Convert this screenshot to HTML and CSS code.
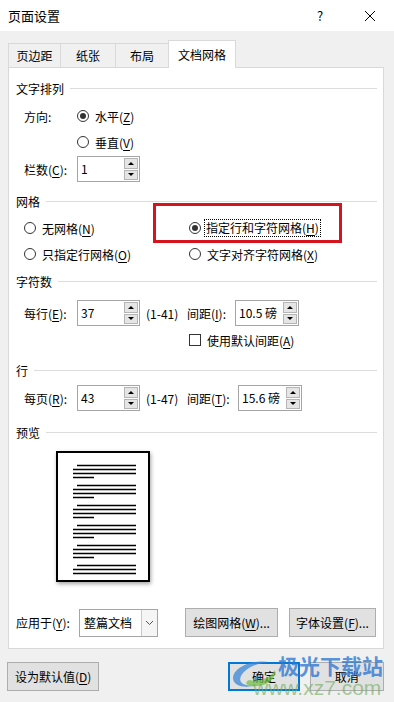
FILE: index.html
```html
<!DOCTYPE html>
<html lang="zh-CN">
<head>
    <meta charset="UTF-8">
    <meta name="viewport" content="width=device-width, initial-scale=1.0">
    <title>页面设置</title>
    <link rel="stylesheet" href="styles.css">
</head>
<body>
    <div class="titlebar">
        <span class="title">页面设置</span>
        <span class="help">?</span>
        <span class="close">
            <svg width="12" height="12" viewBox="0 0 12 12"><path d="M1 1L11 11M11 1L1 11" stroke="#000" stroke-width="1"/></svg>
        </span>
    </div>

    <div class="main">
        <div class="tabs">
            <div class="tab tab-1">页边距</div>
            <div class="tab tab-2">纸张</div>
            <div class="tab tab-3">布局</div>
            <div class="tab tab-4 active">文档网格</div>
        </div>

        <div class="panel">
            <div class="group-title gt-1">文字排列</div>
            <div class="row row-dir">
                <span class="label">方向:</span>
                <span class="radio checked"></span>
                <span class="opt">水平(<u>Z</u>)</span>
            </div>
            <div class="row row-dir">
                <span class="label"></span>
                <span class="radio"></span>
                <span class="opt">垂直(<u>V</u>)</span>
            </div>
            <div class="row row-cols">
                <span class="label">栏数(<u>C</u>):</span>
                <div class="spin">
                    <span class="spin-value">1</span>
                    <div class="spin-btns"><span class="up"></span><span class="down"></span></div>
                </div>
            </div>

            <div class="group-title gt-2">网格</div>
            <div class="row grid-row first">
                <div class="grid-col left"><span class="radio"></span><span class="opt">无网格(<u>N</u>)</span></div>
                <div class="grid-col right"><span class="radio checked"></span><span class="opt focus">指定行和字符网格(<u>H</u>)</span></div>
            </div>
            <div class="row grid-row">
                <div class="grid-col left"><span class="radio"></span><span class="opt">只指定行网格(<u>O</u>)</span></div>
                <div class="grid-col right"><span class="radio"></span><span class="opt">文字对齐字符网格(<u>X</u>)</span></div>
            </div>

            <div class="group-title gt-3">字符数</div>
            <div class="row num-row chars">
                <span class="label">每行(<u>E</u>):</span>
                <div class="spin">
                    <span class="spin-value">37</span>
                    <div class="spin-btns"><span class="up"></span><span class="down"></span></div>
                </div>
                <span class="range">(1-41)</span>
                <span class="pitch-label">间距(<u>I</u>):</span>
                <div class="spin pitch">
                    <span class="spin-value">10.5 磅</span>
                    <div class="spin-btns"><span class="up"></span><span class="down"></span></div>
                </div>
            </div>
            <div class="row check-row">
                <span class="checkbox"></span>
                <span class="opt">使用默认间距(<u>A</u>)</span>
            </div>

            <div class="group-title gt-4">行</div>
            <div class="row num-row lines">
                <span class="label">每页(<u>R</u>):</span>
                <div class="spin">
                    <span class="spin-value">43</span>
                    <div class="spin-btns"><span class="up"></span><span class="down"></span></div>
                </div>
                <span class="range">(1-47)</span>
                <span class="pitch-label">间距(<u>T</u>):</span>
                <div class="spin pitch">
                    <span class="spin-value">15.6 磅</span>
                    <div class="spin-btns"><span class="up"></span><span class="down"></span></div>
                </div>
            </div>

            <div class="group-title gt-5">预览</div>
            <div class="preview">
                <div class="page">
                    <svg width="94" height="131" viewBox="0 0 94 131">
                        <rect x="1" y="1" width="92" height="129" fill="#fff" stroke="#000" stroke-width="2"/>
                        <g stroke="#000" stroke-width="1.4">
                            <path d="M21 14.5H80M17 18.5H80M17 22.5H80M17 26.5H38"/>
                            <path d="M21 34.5H80M17 38.5H80M17 42.5H80M17 46.5H38"/>
                            <path d="M21 54.5H80M17 58.5H80M17 62.5H80M17 66.5H38"/>
                            <path d="M21 74.5H80M17 78.5H80M17 82.5H80M17 86.5H38"/>
                            <path d="M21 94.5H80M17 98.5H80M17 102.5H80M17 106.5H38"/>
                            <path d="M21 114.5H80M17 118.5H80M17 122.5H80"/>
                        </g>
                    </svg>
                </div>
            </div>

            <div class="apply-row">
                <span class="apply-label">应用于(<u>Y</u>):</span>
                <div class="combo">
                    <span class="combo-value">整篇文档</span>
                    <span class="combo-arrow">
                        <svg width="9" height="6" viewBox="0 0 9 6"><path d="M1 1L4.5 4.5L8 1" fill="none" stroke="#555" stroke-width="1"/></svg>
                    </span>
                </div>
                <button class="btn btn-draw">绘图网格(<u>W</u>)...</button>
                <button class="btn btn-font">字体设置(<u>F</u>)...</button>
            </div>
        </div>

        <div class="footer">
            <button class="btn btn-default">设为默认值(<u>D</u>)</button>
            <button class="btn btn-ok">确定</button>
            <button class="btn btn-cancel">取消</button>
        </div>
    </div>

    <div class="highlight"></div>

    <div class="watermark">
        <svg class="wm-logo" width="60" height="34" viewBox="0 0 60 34">
            <path d="M40 4C22 1 4 10 4 20C4 28 16 31 28 27C14 29 9 24 12 18C16 10 28 5 40 4Z" fill="#3a86d8" opacity="0.75"/>
            <path d="M20 22C30 24 42 20 46 12C48 20 38 30 22 28C16 27 16 24 20 22Z" fill="#6cbf3c" opacity="0.7"/>
        </svg>
        <span class="wm-title">极光下载站</span>
        <span class="wm-url">www.xz7.com</span>
    </div>
</body>
</html>
```

FILE: styles.css
```css
body {
    margin: 0;
    width: 394px;
    height: 702px;
    overflow: hidden;
    position: relative;
    background-color: #f0f0f0;
    font-family: "Noto Sans CJK SC", "Microsoft YaHei", sans-serif;
    font-size: 12px;
    color: #000;
}

u {
    text-decoration: underline;
    text-underline-offset: 2px;
}

.titlebar {
    height: 31px;
    background: #fff;
    display: flex;
    align-items: center;
    padding-left: 8px;
    font-size: 13px;
}

.help {
    margin-left: auto;
    width: 10px;
    font-size: 13px;
}

.close {
    display: flex;
    margin-left: 37px;
    margin-right: 18px;
}

.main {
    padding: 9px 10px 0 8px;
}

.tabs {
    display: flex;
    align-items: flex-end;
    height: 27px;
}

.tab {
    height: 24px;
    box-sizing: border-box;
    border: 1px solid #d9d9d9;
    border-bottom: none;
    margin-right: -1px;
    display: flex;
    align-items: center;
    justify-content: center;
    background: #f0f0f0;
}

.tab-1 { width: 53px; }
.tab-2 { width: 56px; }
.tab-3 { width: 54px; }

.tab-4 {
    width: 68px;
    height: 28px;
    margin-bottom: -1px;
    background: #fff;
    position: relative;
    z-index: 1;
}

.panel {
    height: 582px;
    width: 376px;
    box-sizing: border-box;
    background: #fff;
    border: 1px solid #d9d9d9;
    padding: 0 6px 0 7px;
}

.group-title {
    display: flex;
    align-items: center;
    height: 16px;
}

.group-title::after {
    content: "";
    flex: 1;
    margin-left: 6px;
    border-top: 1px solid #dcdcdc;
}

.gt-1 { margin-top: 12px; }
.gt-2 { margin-top: 11px; }
.gt-3 { margin-top: 6px; }
.gt-4 { margin-top: 9px; }
.gt-5 { margin-top: 13px; }

.row {
    display: flex;
    align-items: center;
    height: 26px;
}

.gt-1 + .row { margin-top: 7px; }

.row-cols { margin-top: 1px; }

.label {
    width: 53px;
    padding-left: 8px;
    flex-shrink: 0;
}

.radio {
    width: 12px;
    height: 12px;
    box-sizing: border-box;
    border: 1px solid #333;
    border-radius: 50%;
    background: #fff;
    position: relative;
    flex-shrink: 0;
}

.radio.checked::after {
    content: "";
    position: absolute;
    left: 2px;
    top: 2px;
    width: 6px;
    height: 6px;
    border-radius: 50%;
    background: #333;
}

.opt {
    margin-left: 6px;
}

.grid-row.first { margin-top: 6px; }

.grid-col {
    display: flex;
    align-items: center;
}

.grid-col.left {
    width: 165px;
    padding-left: 8px;
}

.opt.focus {
    margin-left: 4px;
    padding: 0 1px;
    outline: 1px dotted #000;
    line-height: 16px;
}

.spin {
    display: flex;
    width: 63px;
    height: 26px;
    box-sizing: border-box;
    border: 1px solid #a5a5a5;
    background: #fff;
}

.spin-value {
    flex: 1;
    padding-left: 3px;
    line-height: 24px;
}

.spin-btns {
    width: 14px;
    display: flex;
    flex-direction: column;
    padding: 1px 1px 1px 0;
    gap: 1px;
}

.spin-btns span {
    flex: 1;
    background: #e5e5e5;
    border: 1px solid #b5b5b5;
    display: flex;
    align-items: center;
    justify-content: center;
}

.spin-btns .up::after {
    content: "";
    border-left: 3px solid transparent;
    border-right: 3px solid transparent;
    border-bottom: 3px solid #000;
}

.spin-btns .down::after {
    content: "";
    border-left: 3px solid transparent;
    border-right: 3px solid transparent;
    border-top: 3px solid #000;
}

.num-row.chars { margin-top: 11px; }
.num-row.lines { margin-top: 7px; }

.range {
    margin-left: 6px;
    width: 41px;
}

.pitch-label {
    width: 48px;
}

.lines .pitch-label { width: 51px; }

.spin.pitch {
    width: 64px;
}

.check-row {
    margin-top: 1px;
    padding-left: 173px;
}

.checkbox {
    width: 12px;
    height: 12px;
    box-sizing: border-box;
    border: 1px solid #333;
    background: #fff;
}

.preview {
    margin-top: 11px;
    padding-left: 40px;
    height: 131px;
}

.page {
    width: 94px;
    height: 131px;
    box-shadow: 1px 2px 4px rgba(0, 0, 0, 0.35);
}

.page svg {
    display: block;
}

.apply-row {
    display: flex;
    align-items: center;
    margin-top: 26px;
    height: 29px;
}

.apply-label {
    width: 63px;
}

.combo {
    display: flex;
    width: 79px;
    height: 28px;
    box-sizing: border-box;
    border: 1px solid #a5a5a5;
    background: #fff;
}

.combo-value {
    flex: 1;
    padding-left: 4px;
    line-height: 26px;
}

.combo-arrow {
    width: 15px;
    border-left: 1px solid #c8c8c8;
    background: #f5f5f5;
    display: flex;
    align-items: center;
    justify-content: center;
}

.btn {
    font-family: inherit;
    font-size: 12px;
    color: #000;
    background: #e1e1e1;
    border: 1px solid #adadad;
    height: 29px;
    padding: 0;
    box-sizing: border-box;
}

.btn-draw {
    width: 93px;
    margin-left: 27px;
}

.btn-font {
    width: 87px;
    margin-left: 11px;
}

.footer {
    display: flex;
    margin-top: 13px;
    margin-left: -1px;
}

.btn-default {
    width: 93px;
}

.btn-ok {
    width: 72px;
    margin-left: 129px;
    border: 2px solid #0078d7;
}

.btn-cancel {
    width: 75px;
    margin-left: 10px;
}

.highlight {
    position: absolute;
    left: 153px;
    top: 203px;
    width: 189px;
    height: 40px;
    box-sizing: border-box;
    border: 3px solid #d7141d;
}

.watermark {
    position: absolute;
    left: 229px;
    top: 652px;
    width: 165px;
    height: 50px;
    pointer-events: none;
}

.wm-logo {
    position: absolute;
    left: 0;
    top: 6px;
}

.wm-title {
    position: absolute;
    left: 49px;
    top: -2px;
    font-size: 21px;
    font-weight: bold;
    color: rgba(46, 120, 210, 0.8);
}

.wm-url {
    position: absolute;
    left: 24px;
    top: 24px;
    font-family: "Liberation Sans", Arial, sans-serif;
    font-size: 21px;
    color: rgba(110, 170, 90, 0.6);
}
```
